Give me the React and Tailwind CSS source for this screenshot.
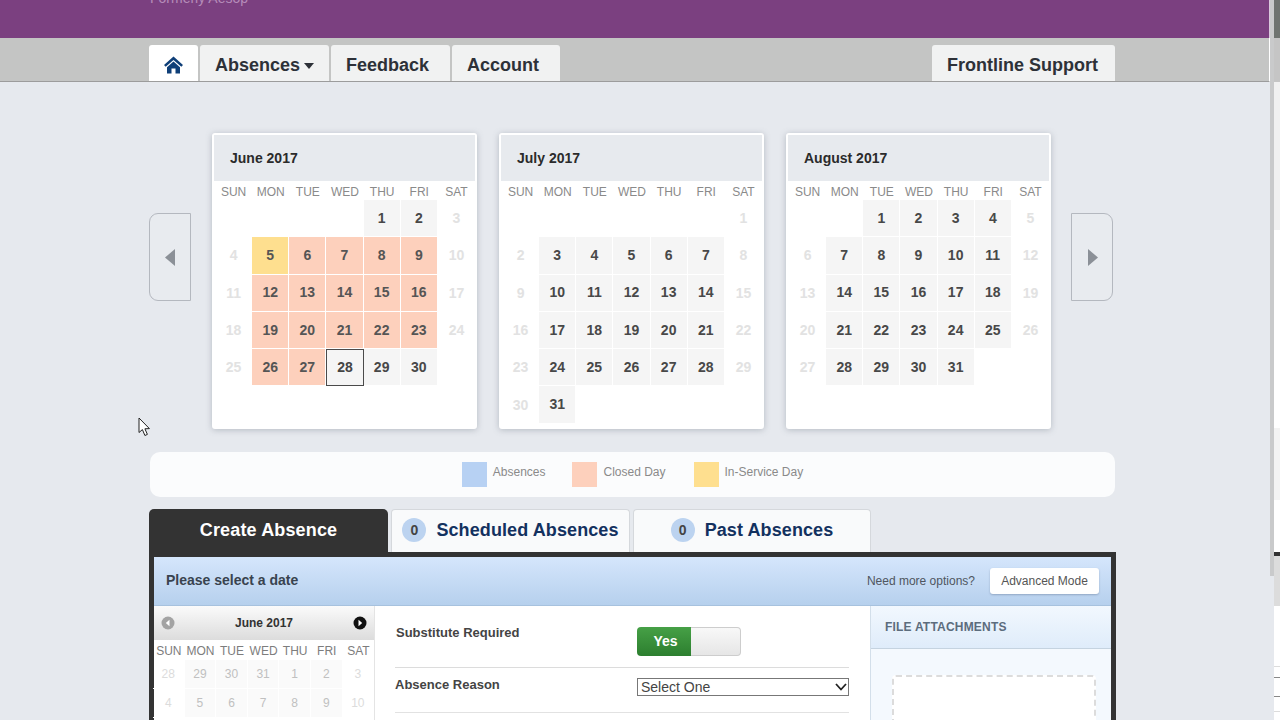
const WEEK = ['SUN', 'MON', 'TUE', 'WED', 'THU', 'FRI', 'SAT'];

const MONTHS = [
  {
    title: 'June 2017',
    offset: 4,
    days: 30,
    yellow: [5],
    closed: [6, 7, 8, 9, 12, 13, 14, 15, 16, 19, 20, 21, 22, 23, 26, 27],
    today: 28,
  },
  { title: 'July 2017', offset: 6, days: 31, yellow: [], closed: [] },
  { title: 'August 2017', offset: 2, days: 31, yellow: [], closed: [] },
];

function dayClass(month, day, col) {
  if (month.today === day) return 'bg-[#f5f5f5] text-[#444] font-bold border border-[#4a4a4a]';
  if (month.yellow.includes(day)) return 'bg-[#fedf8f] text-[#555] font-bold border-r border-b border-white';
  if (month.closed.includes(day)) return 'bg-[#fdd0bc] text-[#555] font-bold border-r border-b border-white';
  if (col === 0 || col === 6) return 'text-[#e2e2e2] font-bold';
  return 'bg-[#f5f5f5] text-[#484848] font-bold border-r border-b border-white';
}

function MonthCard({ month }) {
  const cells = [];
  for (let i = 0; i < month.offset; i++) cells.push(null);
  for (let d = 1; d <= month.days; d++) cells.push(d);

  return (
    <div className="w-[265px] h-[296px] bg-white border-2 border-white rounded-[3px] shadow-[0_1px_6px_rgba(90,100,115,0.35)]">
      <div className="h-[46px] bg-[#e7eaee] pl-[16px] pt-[1px] flex items-center text-[14px] font-bold text-[#2b2b2b]">
        {month.title}
      </div>
      <div className="grid grid-cols-7 h-[19px] pl-[1px] pt-[2px] items-center text-center text-[12px] text-[#8a8a8a]">
        {WEEK.map((w) => (
          <div key={w}>{w}</div>
        ))}
      </div>
      <div className="grid grid-cols-7 auto-rows-[37.3px] pl-[1px] text-[14px]">
        {cells.map((d, i) =>
          d === null ? (
            <div key={i} />
          ) : (
            <div key={i} className={`flex items-center justify-center ${dayClass(month, d, i % 7)}`}>
              {d}
            </div>
          )
        )}
      </div>
    </div>
  );
}

function NavTab({ children, className = '' }) {
  return (
    <div className={`h-[36px] pt-[4px] flex items-center rounded-t-[3px] bg-[#f1f2f2] text-[18px] font-bold text-[#2d3138] ${className}`}>
      {children}
    </div>
  );
}

function HomeIcon() {
  return (
    <svg width="19" height="18" viewBox="0 0 19 18" fill="#0f3f78">
      <path d="M9.5 0.5 L19 9 L17.3 10.8 L9.5 3.9 L1.7 10.8 L0 9 Z" />
      <path d="M9.5 5.6 L16 11.2 V17.5 H11.5 V12.5 H7.5 V17.5 H3 V11.2 Z" />
    </svg>
  );
}

function Arrow({ side }) {
  const right = side === 'right';
  return (
    <div
      className={`w-[42px] h-[88px] mt-[80px] flex items-center justify-center bg-[#e8ebef] border border-[#b4b8bf] ${
        right ? 'rounded-r-[9px] pl-[2px]' : 'rounded-l-[9px]'
      }`}
    >
      <svg width="10" height="17" viewBox="0 0 10 17" fill="#8b9097">
        {right ? <path d="M0 0 L10 8.5 L0 17 Z" /> : <path d="M10 0 L0 8.5 L10 17 Z" />}
      </svg>
    </div>
  );
}

function LegendItem({ color, label, className = '' }) {
  return (
    <div className={`flex items-center ${className}`}>
      <div className={`w-[25px] h-[25px] ${color}`} />
      <span className="ml-[6px] -mt-[5px] text-[12px] text-[#8a8a8a]">{label}</span>
    </div>
  );
}

function CountTab({ count, label, className = '' }) {
  return (
    <div className={`h-[43px] pb-[2px] flex items-center justify-center bg-[#f9fafb] border border-b-0 border-[#d5d8dc] rounded-t-[4px] ${className}`}>
      <span className="w-[24px] h-[24px] rounded-full bg-[#bcd3f0] flex items-center justify-center text-[14px] font-bold text-[#444]">
        {count}
      </span>
      <span className="ml-[10px] text-[18px] tracking-[0.1px] font-bold text-[#13315f]">{label}</span>
    </div>
  );
}

function MiniCalendar() {
  const rows = [28, 29, 30, 31, 1, 2, 3, 4, 5, 6, 7, 8, 9, 10];
  return (
    <div className="w-[221px] shrink-0 border-r border-[#e4e4e4]">
      <div className="h-[34px] px-[7px] flex items-center justify-between bg-gradient-to-b from-[#fbfbfb] to-[#dcdcdc]">
        <svg width="14" height="14" viewBox="0 0 14 14">
          <circle cx="7" cy="7" r="6.5" fill="#a3a3a3" />
          <path d="M8.5 3.8 L4.8 7 L8.5 10.2 Z" fill="#fff" />
        </svg>
        <span className="text-[12px] font-bold text-[#333]">June 2017</span>
        <svg width="14" height="14" viewBox="0 0 14 14">
          <circle cx="7" cy="7" r="6.5" fill="#111" />
          <path d="M5.5 3.8 L9.2 7 L5.5 10.2 Z" fill="#fff" />
        </svg>
      </div>
      <div className="-ml-[1px] grid grid-cols-[repeat(7,31.6px)] h-[20px] pt-[2px] items-center text-center text-[12px] text-[#7d7d7d]">
        {WEEK.map((w) => (
          <div key={w}>{w}</div>
        ))}
      </div>
      <div className="-ml-[1px] grid grid-cols-[repeat(7,31.6px)] auto-rows-[29px] text-[12px]">
        {rows.map((d, i) => {
          const weekend = i % 7 === 0 || i % 7 === 6;
          return (
            <div
              key={i}
              className={`flex items-center justify-center border-r border-b border-white ${
                weekend ? 'text-[#dcdcdc]' : 'bg-[#fafafa] text-[#c0c0c0]'
              }`}
            >
              {d}
            </div>
          );
        })}
      </div>
    </div>
  );
}

function Form() {
  return (
    <div className="w-[454px] ml-[20px] shrink-0">
      <div className="h-[62px] flex border-b border-[#dcdcdc]">
        <div className="w-[242px] pl-[1px] pt-[19px] text-[13px] font-bold text-[#444] leading-[16px]">Substitute Required</div>
        <div className="pt-[21px] flex h-[50px]">
          <div className="w-[54px] h-[29px] pl-[3px] rounded-l-[4px] bg-gradient-to-b from-[#46a046] to-[#2c7f2f] flex items-center justify-center text-[14px] font-bold text-white">
            Yes
          </div>
          <div className="w-[50px] h-[29px] rounded-r-[4px] bg-gradient-to-b from-[#f8f8f8] to-[#e6e6e6] border border-l-0 border-[#cdcdcd]" />
        </div>
      </div>
      <div className="h-[45px] flex border-b border-[#e2e2e2]">
        <div className="w-[242px] pt-[9px] text-[13px] leading-[16px] font-bold text-[#444]">Absence Reason</div>
        <div className="relative mt-[10px] w-[212px] h-[18px]">
          <select className="block w-full h-full appearance-none pl-[3px] bg-white border border-[#777] text-[14px] leading-[16px] text-[#444]" defaultValue="one">
            <option value="one">Select One</option>
          </select>
          <svg width="12" height="8" viewBox="0 0 12 8" className="absolute right-[2px] top-[5px] pointer-events-none">
            <path d="M1 1 L6 6.5 L11 1" fill="none" stroke="#222" strokeWidth="1.8" />
          </svg>
        </div>
      </div>
    </div>
  );
}

function FileAttachments() {
  return (
    <div className="ml-[21px] flex-1 bg-[#f4f9fe] border-l border-[#d3dfea]">
      <div className="h-[43px] pl-[14px] flex items-center bg-gradient-to-b from-[#f2f8fe] to-[#dfecfa] border-b border-[#c5d3e0] text-[12px] font-bold tracking-[0.2px] text-[#5c6c7d]">
        FILE ATTACHMENTS
      </div>
      <div className="mt-[26px] ml-[21px] w-[204px] h-[120px] bg-white border-2 border-dashed border-[#dcdcdc] rounded-[4px]" />
    </div>
  );
}

// the window behind this one peeks out at the right edge
function BehindStrip() {
  return (
    <div className="w-[6px] h-[720px] shrink-0 flex flex-col bg-white">
      <div className="h-[38px] bg-[#6f7470]" />
      <div className="h-[44px] bg-[#c5c5c5]" />
      <div className="h-[148px] bg-[#f1f1f1]" />
      <div className="h-[198px] bg-white" />
      <div className="h-[72px] bg-[#f3f3f3]" />
      <div className="h-[52px] bg-white" />
      <div className="h-[4px] bg-[#333]" />
      <div className="h-[50px] bg-[#dcdcdc]" />
      <div className="h-[61px] bg-white border-b border-[#dcdcdc]" />
      <div className="h-[11px] bg-white border-b border-[#888]" />
      <div className="h-[19px] bg-white border-b border-[#888]" />
      <div className="h-[15px] bg-white border-b border-[#dcdcdc]" />
    </div>
  );
}

export default function App() {
  return (
    <div className="relative w-[1280px] h-[720px] overflow-hidden flex bg-[#e6e9ee] font-['Liberation_Sans',Arial,sans-serif]">
      <div className="w-[1270px] shrink-0">
        <div className="h-[38px] bg-[#7b4080] pl-[150px] overflow-hidden border-r border-[#d9c8dc]">
          <div className="-mt-[10px] text-[14px] leading-[16px] text-[#b58cb9]">Formerly Aesop</div>
        </div>
        <div className="h-[44px] pt-[7px] pl-[149px] flex bg-[#c4c5c4] border-b border-r border-b-[#9c9c9c] border-r-white">
          <NavTab className="w-[49px] justify-center !bg-white mr-[2px]">
            <HomeIcon />
          </NavTab>
          <NavTab className="w-[129px] pl-[15px] mr-[2px]">
            Absences
            <svg width="10" height="6" viewBox="0 0 10 6" fill="#2d3138" className="ml-[4px] mt-[2px]">
              <path d="M0 0 H10 L5 6 Z" />
            </svg>
          </NavTab>
          <NavTab className="w-[119px] pl-[15px] mr-[2px]">Feedback</NavTab>
          <NavTab className="w-[108px] pl-[15px] mr-[372px]">Account</NavTab>
          <NavTab className="w-[183px] pl-[15px]">Frontline Support</NavTab>
        </div>

        <div className="pl-[149px] pt-[51px] flex">
          <Arrow side="left" />
          <div className="ml-[21px] mr-[20px] flex gap-[22px]">
            {MONTHS.map((m) => (
              <MonthCard key={m.title} month={m} />
            ))}
          </div>
          <Arrow side="right" />
        </div>

        <div className="ml-[150px] mt-[23px] w-[965px] h-[45px] flex items-center justify-center bg-[#fbfcfd] rounded-[10px]">
          <LegendItem color="bg-[#b7d1f3]" label="Absences" className="mr-[27px]" />
          <LegendItem color="bg-[#fdd0bc]" label="Closed Day" className="mr-[28px]" />
          <LegendItem color="bg-[#fedf8f]" label="In-Service Day" />
        </div>

        <div className="ml-[149px] mt-[12px] w-[967px] flex">
          <div className="w-[239px] h-[43px] flex items-center justify-center bg-[#333] rounded-t-[5px] text-[18px] tracking-[0.15px] font-bold text-white">
            Create Absence
          </div>
          <CountTab count="0" label="Scheduled Absences" className="w-[239px] ml-[3px]" />
          <CountTab count="0" label="Past Absences" className="w-[238px] ml-[3px]" />
        </div>

        <div className="ml-[149px] w-[967px] h-[300px] border-[5px] border-b-0 border-[#333] bg-white">
          <div className="h-[49px] pl-[12px] pr-[12px] pb-[1px] flex items-center bg-gradient-to-b from-[#d5e6fc] to-[#b6d0ed] border-b border-[#a7c2de]">
            <span className="text-[14px] font-bold text-[#39434f]">Please select a date</span>
            <span className="ml-auto text-[12px] text-[#4f5660]">Need more options?</span>
            <span className="ml-[15px] w-[109px] h-[26px] flex items-center justify-center bg-white rounded-[3px] shadow-[0_1px_2px_rgba(80,100,130,0.4)] text-[12px] text-[#555]">
              Advanced Mode
            </span>
          </div>
          <div className="flex h-[246px]">
            <MiniCalendar />
            <Form />
            <FileAttachments />
          </div>
        </div>
      </div>

      <div className="w-[4px] h-[576px] shrink-0 bg-[#c9cacb]" />
      <BehindStrip />

      <svg width="13" height="20" viewBox="0 0 13 20" className="absolute left-[138px] top-[417px]">
        <path d="M1 1 V15.5 L4.4 12.6 L6.9 18.5 L9.4 17.4 L6.9 11.8 L11.4 11.6 Z" fill="#fff" stroke="#222" strokeWidth="1" />
      </svg>
    </div>
  );
}
